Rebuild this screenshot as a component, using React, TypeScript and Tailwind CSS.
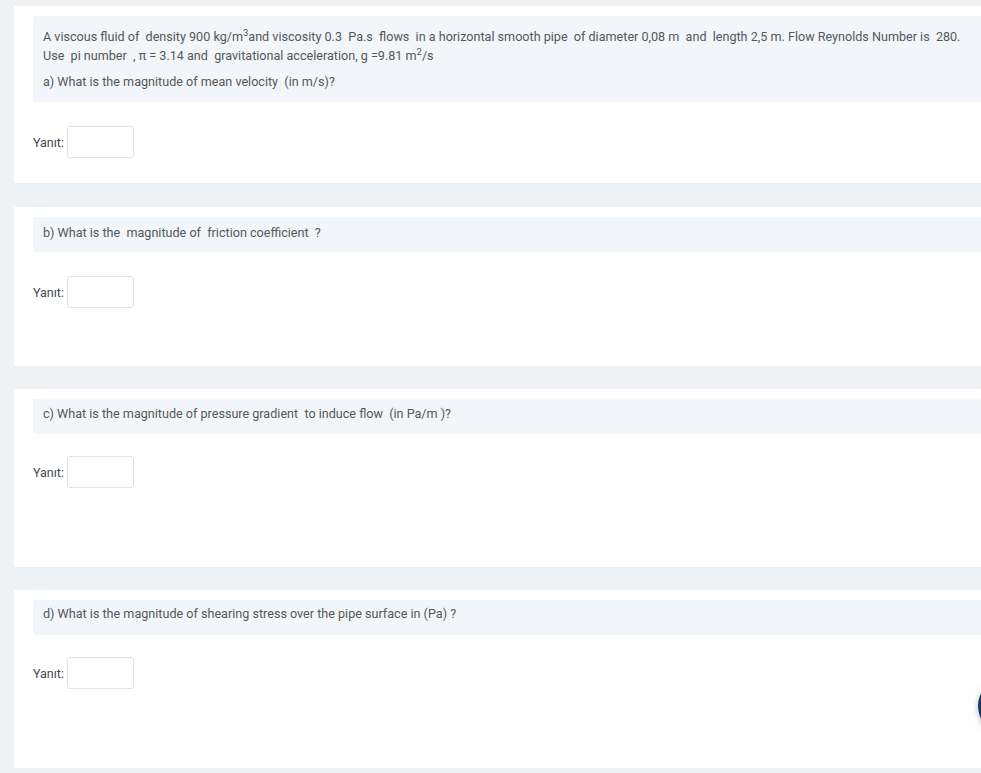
import React from 'react';

type Question = {
  id: string;
  height: string;
  gap: string;
  answerGap: string;
  content: React.ReactNode;
};

const Sup = ({ children }: { children: React.ReactNode }) => (
  <span className="text-[9.5px] relative -top-[5px] leading-none">{children}</span>
);

const questions: Question[] = [
  {
    id: 'a',
    height: 'h-[177px]',
    gap: 'mt-0',
    answerGap: 'mt-[24px]',
    content: (
      <div className="pt-[11px] pb-[11px]">
        <p className="whitespace-pre-wrap">
          A viscous fluid of  density 900 kg/m<Sup>3</Sup>and viscosity 0.3  Pa.s  flows  in a horizontal smooth pipe  of diameter 0,08 m  and  length 2,5 m. Flow Reynolds Number is  280.
          <br />
          Use  pi number  , π = 3.14 and  gravitational acceleration, g =9.81 m<Sup>2</Sup>/s
        </p>
        <p className="mt-[7px] whitespace-pre-wrap">a) What is the magnitude of mean velocity  (in m/s)?</p>
      </div>
    ),
  },
  {
    id: 'b',
    height: 'h-[159px]',
    gap: 'mt-[24px]',
    answerGap: 'mt-[24px]',
    content: (
      <p className="pt-[6px] pb-[10px] whitespace-pre-wrap">b) What is the  magnitude of  friction coefficient  ?</p>
    ),
  },
  {
    id: 'c',
    height: 'h-[178px]',
    gap: 'mt-[23px]',
    answerGap: 'mt-[22px]',
    content: (
      <p className="pt-[5px] pb-[11px] whitespace-pre-wrap">c) What is the magnitude of pressure gradient  to induce flow  (in Pa/m )?</p>
    ),
  },
  {
    id: 'd',
    height: 'h-[178px]',
    gap: 'mt-[23px]',
    answerGap: 'mt-[22px]',
    content: (
      <p className="pt-[4px] pb-[12px] whitespace-pre-wrap">d) What is the magnitude of shearing stress over the pipe surface in (Pa) ?</p>
    ),
  },
];

export default function App() {
  return (
    <div
      className="relative w-[981px] h-[773px] overflow-hidden bg-[#eff2f4] pt-[6px] text-[12.6px] leading-[19px] text-[#55585b]"
      style={{ fontFamily: 'Roboto, "Liberation Sans", sans-serif' }}
    >
      {questions.map((q) => (
        <div key={q.id} className={`${q.gap} ${q.height} ml-[14px] w-[1000px] bg-white pt-[10px] pl-[19px]`}>
          {/* question text */}
          <div className="bg-[#f2f5f9] pl-[10px] rounded-l-[2px]">{q.content}</div>

          {/* answer row */}
          <div className={`${q.answerGap} flex items-center`}>
            <label className="text-[12.5px] text-[#45484b] mr-[3px]">Yanıt:</label>
            <input
              type="text"
              className="w-[67px] h-[32px] bg-white border border-[#dfe3e7] rounded-[3px] outline-none"
            />
          </div>
        </div>
      ))}

      {/* floating button, mostly off screen */}
      <div className="absolute left-[978px] top-[678px] w-[56px] h-[56px] rounded-full bg-[#173a6c] shadow-[0_2px_6px_rgba(0,0,0,0.25)]" />
    </div>
  );
}
